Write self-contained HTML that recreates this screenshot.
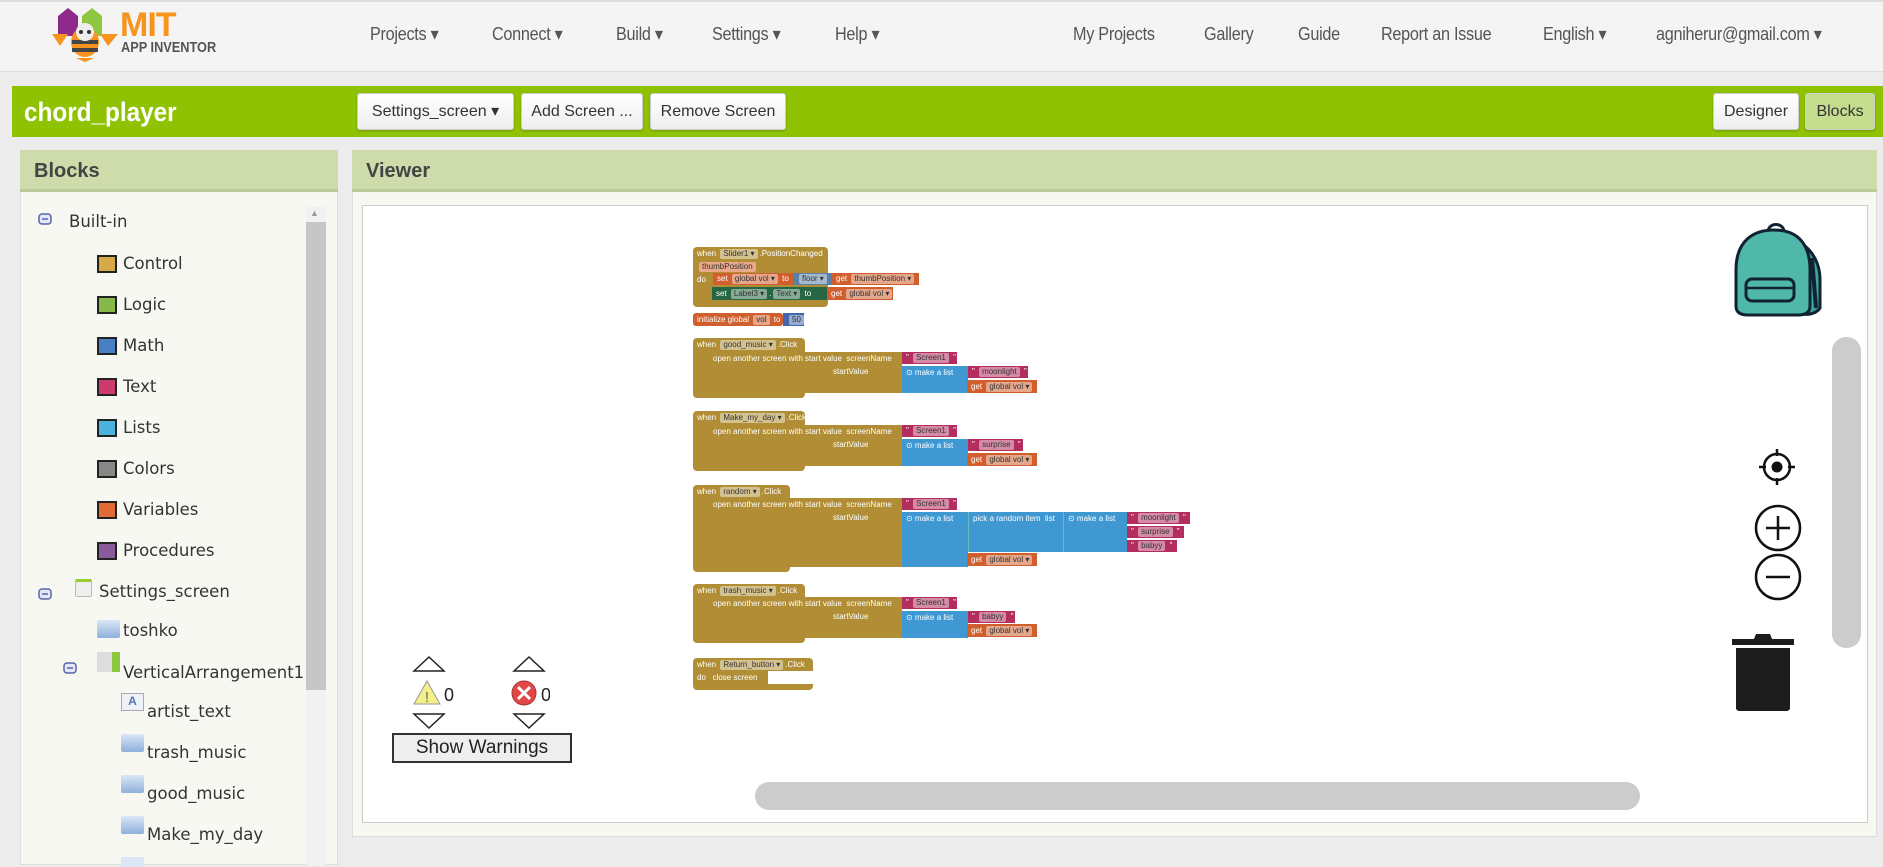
<!DOCTYPE html>
<html><head><meta charset="utf-8"><style>
*{box-sizing:border-box;margin:0;padding:0}
body{width:1883px;height:865px;overflow:hidden;background:#ececec;font-family:"Liberation Sans",sans-serif;position:relative}
.a{position:absolute;white-space:nowrap}
.nav{font-size:18px;color:#555;top:24px;letter-spacing:-0.3px;transform:scaleX(.9);transform-origin:left}
.btn{position:absolute;top:93px;height:37px;background:linear-gradient(#fff,#eee);border:1px solid #ccc;border-radius:3px;font-size:16px;color:#333;line-height:35px;text-align:center;box-shadow:0 1px 2px rgba(0,0,0,.2);white-space:nowrap;overflow:hidden}
.ti{position:absolute;color:#333;font-family:"DejaVu Sans",sans-serif;font-size:16.5px;white-space:nowrap}
.sq{position:absolute;width:20px;height:18px;border:2px solid #222}
.b{position:absolute;font-size:8px;color:#fff;line-height:13px;padding-left:4px;font-family:"Liberation Sans",sans-serif;white-space:nowrap;overflow:hidden}
.ch{display:inline-block;background:rgba(255,255,255,.45);color:#333;border-radius:2px;padding:0 3px;line-height:10px;margin:0 2px}
.ev{background:#b18e35}.or{background:#d05f2d}.bl{background:#3f98d2;}.pk{background:#b32d5e}.gr{background:#266643}.mb{background:#5b80a5}
</style></head><body>
<!-- header -->
<div class="a" style="left:0;top:0;width:1883px;height:72px;background:#f4f4f4;border-bottom:1px solid #ddd;border-top:2px solid #ddd"></div>
<svg class="a" style="left:50px;top:6px" width="70" height="56" viewBox="0 0 70 56">
<polygon points="8,10 18,2 28,10 28,30 8,30" fill="#8f2a8c"/><polygon points="32,10 42,2 52,10 52,30 32,30" fill="#8dc63f"/>
<path d="M2,28 L18,28 L10,40Z" fill="#f7941d"/><path d="M50,28 L68,28 L58,40Z" fill="#f7941d"/>
<ellipse cx="35" cy="36" rx="14" ry="15" fill="#f7941d"/><rect x="22" y="34" width="26" height="4" fill="#444"/><rect x="22" y="42" width="26" height="4" fill="#444"/>
<circle cx="35" cy="26" r="9" fill="#eee"/><circle cx="31" cy="26" r="2" fill="#333"/><circle cx="39" cy="26" r="2" fill="#333"/>
<path d="M26,52 L44,52 L35,56Z" fill="#f7941d"/></svg>
<div class="a" style="left:120px;top:6px;font-size:34px;font-weight:bold;color:#f7941d;letter-spacing:-1px">MIT</div>
<div class="a" style="left:121px;top:39px;font-size:15px;font-weight:bold;color:#555;transform:scaleX(.85);transform-origin:left">APP INVENTOR</div>
<div class="a nav" style="left:370px">Projects ▾</div>
<div class="a nav" style="left:492px">Connect ▾</div>
<div class="a nav" style="left:616px">Build ▾</div>
<div class="a nav" style="left:712px">Settings ▾</div>
<div class="a nav" style="left:835px">Help ▾</div>
<div class="a nav" style="left:1073px">My Projects</div>
<div class="a nav" style="left:1204px">Gallery</div>
<div class="a nav" style="left:1298px">Guide</div>
<div class="a nav" style="left:1381px">Report an Issue</div>
<div class="a nav" style="left:1543px">English ▾</div>
<div class="a nav" style="left:1656px">agniherur@gmail.com ▾</div>
<!-- green bar -->
<div class="a" style="left:12px;top:86px;width:1871px;height:51px;background:#8fc202"></div>
<div class="a" style="left:24px;top:97px;font-size:27px;font-weight:bold;color:#fff;transform:scaleX(.9);transform-origin:left">chord_player</div>
<div class="btn" style="left:357px;width:157px">Settings_screen ▾</div>
<div class="btn" style="left:521px;width:122px">Add Screen ...</div>
<div class="btn" style="left:650px;width:136px">Remove Screen</div>
<div class="btn" style="left:1713px;width:86px">Designer</div>
<div class="btn" style="left:1805px;width:70px;background:#c5dd8e">Blocks</div>
<!-- blocks panel -->
<div class="a" style="left:20px;top:150px;width:318px;height:715px;background:#f8f8f3;border:1px solid #ddd"></div>
<div class="a" style="left:20px;top:150px;width:318px;height:42px;background:#cddcaa;border-bottom:3px solid #bcc99a"></div>
<div class="a" style="left:34px;top:160px;font-size:20px;font-weight:bold;color:#444">Blocks</div>
<div class="a" style="left:306px;top:207px;width:20px;height:658px;background:#f1f1f1"></div>
<div class="a" style="left:306px;top:222px;width:20px;height:468px;background:#c6c6c6"></div>
<div class="a" style="left:310px;top:208px;font-size:9px;color:#999">▲</div>
<svg class="a" style="left:38px;top:213px" width="14" height="12"><rect x="1" y="1" width="12" height="10" rx="3" fill="#e6e6f6" stroke="#56a" stroke-width="1.5"/><line x1="4" y1="6" x2="10" y2="6" stroke="#56a" stroke-width="1.5"/></svg>
<div class="ti" style="left:69px;top:212px">Built-in</div>
<div class="sq" style="left:97px;top:255px;background:#d5a948"></div><div class="ti" style="left:123px;top:254px">Control</div>
<div class="sq" style="left:97px;top:296px;background:#86b94a"></div><div class="ti" style="left:123px;top:295px">Logic</div>
<div class="sq" style="left:97px;top:337px;background:#4a7fc6"></div><div class="ti" style="left:123px;top:336px">Math</div>
<div class="sq" style="left:97px;top:378px;background:#cc3a6e"></div><div class="ti" style="left:123px;top:377px">Text</div>
<div class="sq" style="left:97px;top:419px;background:#4cb3e0"></div><div class="ti" style="left:123px;top:418px">Lists</div>
<div class="sq" style="left:97px;top:460px;background:#888"></div><div class="ti" style="left:123px;top:459px">Colors</div>
<div class="sq" style="left:97px;top:501px;background:#e06b34"></div><div class="ti" style="left:123px;top:500px">Variables</div>
<div class="sq" style="left:97px;top:542px;background:#8a5a9a"></div><div class="ti" style="left:123px;top:541px">Procedures</div>
<svg class="a" style="left:38px;top:588px" width="14" height="12"><rect x="1" y="1" width="12" height="10" rx="3" fill="#e6e6f6" stroke="#56a" stroke-width="1.5"/><line x1="4" y1="6" x2="10" y2="6" stroke="#56a" stroke-width="1.5"/></svg>
<div class="a" style="left:75px;top:579px;width:17px;height:18px;background:#eee;border:1px solid #bbb;border-top:3px solid #9c3;border-radius:2px"></div>
<div class="ti" style="left:99px;top:582px">Settings_screen</div>
<div class="a" style="left:97px;top:620px;width:23px;height:18px;background:linear-gradient(#dbe7f6,#8eb0dc);border-radius:2px"></div><div class="ti" style="left:123px;top:621px">toshko</div>
<svg class="a" style="left:63px;top:662px" width="14" height="12"><rect x="1" y="1" width="12" height="10" rx="3" fill="#e6e6f6" stroke="#56a" stroke-width="1.5"/><line x1="4" y1="6" x2="10" y2="6" stroke="#56a" stroke-width="1.5"/></svg>
<div class="a" style="left:97px;top:652px;width:23px;height:20px;background:#ddd;border-right:8px solid #8dc63f"></div><div class="ti" style="left:123px;top:663px">VerticalArrangement1</div>
<div class="a" style="left:121px;top:693px;width:23px;height:18px;background:#eef2f8;border:1px solid #aaa;color:#57a;font-size:12px;font-weight:bold;text-align:center">A</div><div class="ti" style="left:147px;top:702px">artist_text</div>
<div class="a" style="left:121px;top:734px;width:23px;height:18px;background:linear-gradient(#dbe7f6,#8eb0dc);border-radius:2px"></div><div class="ti" style="left:147px;top:743px">trash_music</div>
<div class="a" style="left:121px;top:775px;width:23px;height:18px;background:linear-gradient(#dbe7f6,#8eb0dc);border-radius:2px"></div><div class="ti" style="left:147px;top:784px">good_music</div>
<div class="a" style="left:121px;top:816px;width:23px;height:18px;background:linear-gradient(#dbe7f6,#8eb0dc);border-radius:2px"></div><div class="ti" style="left:147px;top:825px">Make_my_day</div>
<div class="a" style="left:121px;top:857px;width:23px;height:10px;background:#dbe7f6"></div>
<!-- viewer -->
<div class="a" style="left:352px;top:150px;width:1525px;height:687px;background:#f8f8f3;border:1px solid #ddd"></div>
<div class="a" style="left:352px;top:150px;width:1525px;height:42px;background:#cddcaa;border-bottom:3px solid #bcc99a"></div>
<div class="a" style="left:366px;top:160px;font-size:20px;font-weight:bold;color:#444">Viewer</div>
<div class="a" style="left:362px;top:205px;width:1506px;height:618px;background:#fff;border:1px solid #ccc"></div>
<!-- blocks -->
<div class="b ev" style="left:693px;top:247px;width:135px;height:60px;border-radius:4px">when <span class="ch">Slider1 ▾</span>.PositionChanged<br><span class="ch" style="background:#e9a98a">thumbPosition</span><br>do</div>
<div class="b or" style="left:713px;top:273px;width:80px;height:12px;line-height:12px">set <span class="ch">global vol ▾</span> to</div>
<div class="b mb" style="left:793px;top:273px;width:39px;height:12px;line-height:12px"><span class="ch">floor ▾</span></div>
<div class="b or" style="left:832px;top:273px;width:87px;height:12px;line-height:12px">get <span class="ch">thumbPosition ▾</span></div>
<div class="b gr" style="left:712px;top:287px;width:115px;height:13px">set <span class="ch">Label3 ▾</span>.<span class="ch">Text ▾</span> to</div>
<div class="b or" style="left:827px;top:287px;width:66px;height:13px">get <span class="ch">global vol ▾</span></div>
<div class="b or" style="left:693px;top:313px;width:90px;height:13px;border-radius:3px">initialize global <span class="ch">vol</span> to</div>
<div class="b bl" style="left:783px;top:313px;width:21px;height:13px;background:#4466aa"><span class="ch">50</span></div>

<!-- good_music -->
<div class="b ev" style="left:693px;top:338px;width:112px;height:60px;border-radius:4px">when <span class="ch">good_music ▾</span>.Click<br>do</div>
<div class="b ev" style="left:693px;top:352px;width:209px;height:41px;padding-left:20px">open another screen with start value &nbsp;screenName<br><span style="padding-left:120px">startValue</span></div>
<div class="b pk" style="left:902px;top:352px;width:55px;height:12px;line-height:12px">" <span class="ch">Screen1</span> "</div>
<div class="b bl" style="left:902px;top:366px;width:66px;height:27px">⊙ make a list</div>
<div class="b pk" style="left:968px;top:366px;width:60px;height:12px;line-height:12px">" <span class="ch">moonlight</span> "</div>
<div class="b or" style="left:967px;top:380px;width:70px;height:13px">get <span class="ch">global vol ▾</span></div>
<!-- make_my_day -->
<div class="b ev" style="left:693px;top:411px;width:112px;height:60px;border-radius:4px">when <span class="ch">Make_my_day ▾</span>.Click<br>do</div>
<div class="b ev" style="left:693px;top:425px;width:209px;height:41px;padding-left:20px">open another screen with start value &nbsp;screenName<br><span style="padding-left:120px">startValue</span></div>
<div class="b pk" style="left:902px;top:425px;width:55px;height:12px;line-height:12px">" <span class="ch">Screen1</span> "</div>
<div class="b bl" style="left:902px;top:439px;width:66px;height:27px">⊙ make a list</div>
<div class="b pk" style="left:968px;top:439px;width:55px;height:12px;line-height:12px">" <span class="ch">surprise</span> "</div>
<div class="b or" style="left:967px;top:453px;width:70px;height:13px">get <span class="ch">global vol ▾</span></div>
<!-- random -->
<div class="b ev" style="left:693px;top:485px;width:97px;height:87px;border-radius:4px">when <span class="ch">random ▾</span>.Click<br>do</div>
<div class="b ev" style="left:693px;top:498px;width:209px;height:69px;padding-left:20px">open another screen with start value &nbsp;screenName<br><span style="padding-left:120px">startValue</span></div>
<div class="b pk" style="left:902px;top:498px;width:55px;height:12px;line-height:12px">" <span class="ch">Screen1</span> "</div>
<div class="b bl" style="left:902px;top:512px;width:66px;height:55px">⊙ make a list</div>
<div class="b bl" style="left:968px;top:512px;width:95px;height:40px;border-left:1px solid #6bb">pick a random item &nbsp;list</div>
<div class="b bl" style="left:1063px;top:512px;width:64px;height:40px;border-left:1px solid #6bb">⊙ make a list</div>
<div class="b pk" style="left:1127px;top:512px;width:63px;height:12px;line-height:12px">" <span class="ch">moonlight</span> "</div>
<div class="b pk" style="left:1127px;top:526px;width:57px;height:12px;line-height:12px">" <span class="ch">surprise</span> "</div>
<div class="b pk" style="left:1127px;top:540px;width:50px;height:12px;line-height:12px">" <span class="ch">babyy</span> "</div>
<div class="b or" style="left:967px;top:553px;width:70px;height:13px">get <span class="ch">global vol ▾</span></div>
<!-- trash -->
<div class="b ev" style="left:693px;top:584px;width:112px;height:59px;border-radius:4px">when <span class="ch">trash_music ▾</span>.Click<br>do</div>
<div class="b ev" style="left:693px;top:597px;width:209px;height:41px;padding-left:20px">open another screen with start value &nbsp;screenName<br><span style="padding-left:120px">startValue</span></div>
<div class="b pk" style="left:902px;top:597px;width:55px;height:12px;line-height:12px">" <span class="ch">Screen1</span> "</div>
<div class="b bl" style="left:902px;top:611px;width:66px;height:27px">⊙ make a list</div>
<div class="b pk" style="left:968px;top:611px;width:47px;height:12px;line-height:12px">" <span class="ch">babyy</span> "</div>
<div class="b or" style="left:967px;top:624px;width:70px;height:13px">get <span class="ch">global vol ▾</span></div>
<!-- return -->
<div class="b ev" style="left:693px;top:658px;width:120px;height:32px;border-radius:4px">when <span class="ch">Return_button ▾</span>.Click<br>do &nbsp;&nbsp;close screen</div>
<div class="a" style="left:768px;top:671px;width:45px;height:13px;background:#fff"></div>
<!-- right controls -->
<svg class="a" style="left:1728px;top:220px" width="104" height="100" viewBox="0 0 104 100">
<path d="M40,12 C40,2 56,2 56,12" fill="none" stroke="#123" stroke-width="3"/>
<path d="M62,20 C80,22 92,40 92,60 L92,88 C88,94 80,95 74,94Z" fill="#3aa69a" stroke="#123" stroke-width="3"/>
<path d="M84,38 L88,88" stroke="#123" stroke-width="4"/>
<path d="M8,50 C8,20 26,10 46,10 C66,10 82,20 82,50 L82,86 C82,92 78,95 70,95 L20,95 C12,95 8,92 8,86Z" fill="#4fb8a8" stroke="#123" stroke-width="3"/>
<rect x="18" y="59" width="48" height="22" rx="6" fill="#4fb8a8" stroke="#123" stroke-width="3"/>
<line x1="18" y1="68" x2="66" y2="68" stroke="#123" stroke-width="2.5"/></svg>
<div class="a" style="left:1832px;top:337px;width:29px;height:311px;background:#ccc;border-radius:14px"></div>
<svg class="a" style="left:1756px;top:446px" width="42" height="42"><circle cx="21" cy="21" r="13" fill="none" stroke="#111" stroke-width="2.5"/><circle cx="21" cy="21" r="5.5" fill="#111"/><path d="M21,3V10M21,32V39M3,21H10M32,21H39" stroke="#111" stroke-width="2.5"/></svg>
<svg class="a" style="left:1751px;top:503px" width="54" height="100"><circle cx="27" cy="25" r="22" fill="none" stroke="#111" stroke-width="2.5"/><path d="M15,25H39M27,13V37" stroke="#111" stroke-width="2.5"/><circle cx="27" cy="74" r="22" fill="none" stroke="#111" stroke-width="2.5"/><path d="M15,74H39" stroke="#111" stroke-width="2.5"/></svg>
<svg class="a" style="left:1730px;top:634px" width="66" height="78"><path d="M26,0H40L42,5H64V11H2V5H24Z" fill="#1c1c1c"/><path d="M6,14H60V74C60,76 58,77 56,77H10C8,77 6,76 6,74Z" fill="#1c1c1c"/></svg>
<div class="a" style="left:755px;top:782px;width:885px;height:28px;background:#ccc;border-radius:14px"></div>
<!-- warnings -->
<svg class="a" style="left:410px;top:655px" width="140" height="76">
<path d="M4,16L19,2L34,16Z" fill="#fff" stroke="#222" stroke-width="1.5"/><path d="M104,16L119,2L134,16Z" fill="#fff" stroke="#222" stroke-width="1.5"/>
<path d="M4,59L19,73L34,59Z" fill="#fff" stroke="#222" stroke-width="1.5"/><path d="M104,59L119,73L134,59Z" fill="#fff" stroke="#222" stroke-width="1.5"/>
<path d="M17,26L30,49H4Z" fill="#f3f08a" stroke="#999" stroke-width="1"/><text x="17" y="47" font-size="15" text-anchor="middle" fill="#666" font-family="Liberation Sans">!</text>
<circle cx="114" cy="38" r="12" fill="#e04848" stroke="#a33"/><path d="M108,32L120,44M120,32L108,44" stroke="#fff" stroke-width="3"/>
<text x="34" y="46" font-size="18" fill="#222" font-family="Liberation Sans">0</text><text x="131" y="46" font-size="18" fill="#222" font-family="Liberation Sans">0</text></svg>
<div class="a" style="left:392px;top:733px;width:180px;height:30px;background:#eee;border:2px solid #333;font-size:19px;color:#222;text-align:center;line-height:26px">Show Warnings</div>
</body></html>
